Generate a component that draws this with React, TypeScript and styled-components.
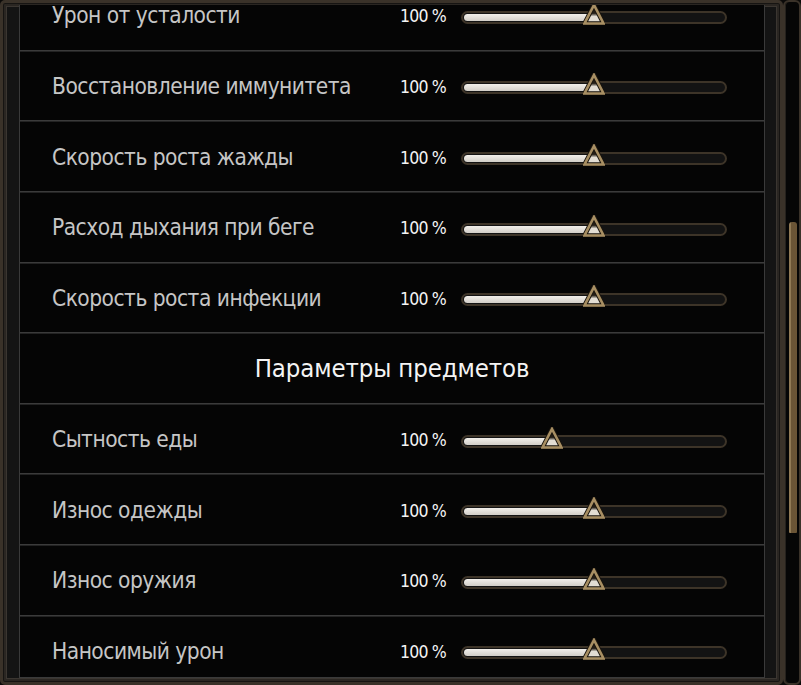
import React, {ReactElement, useLayoutEffect, useRef} from 'react';
import styled, {createGlobalStyle} from 'styled-components';

type SettingRow = {kind: 'setting'; label: string; value: number; pos: number};
type HeaderRow = {kind: 'header'; title: string};
type Item = SettingRow | HeaderRow;

const items: Item[] = [
    {kind: 'setting', label: 'Урон от усталости', value: 100, pos: 0.5},
    {kind: 'setting', label: 'Восстановление иммунитета', value: 100, pos: 0.5},
    {kind: 'setting', label: 'Скорость роста жажды', value: 100, pos: 0.5},
    {kind: 'setting', label: 'Расход дыхания при беге', value: 100, pos: 0.5},
    {kind: 'setting', label: 'Скорость роста инфекции', value: 100, pos: 0.5},
    {kind: 'header', title: 'Параметры предметов'},
    {kind: 'setting', label: 'Сытность еды', value: 100, pos: 0.338},
    {kind: 'setting', label: 'Износ одежды', value: 100, pos: 0.5},
    {kind: 'setting', label: 'Износ оружия', value: 100, pos: 0.5},
    {kind: 'setting', label: 'Наносимый урон', value: 100, pos: 0.5},
];

const GlobalStyle = createGlobalStyle`
    html, body {
        margin: 0;
        padding: 0;
        background: #000;
    }
    body {
        font-family: 'Liberation Sans Narrow', 'DejaVu Sans Condensed', 'Liberation Sans', sans-serif;
    }
`;

function Thumb(): ReactElement {
    return (
        <ThumbIcon width="22" height="22" viewBox="0 0 22 22">
            <defs>
                <linearGradient id="thumb-fill" x1="0" y1="0" x2="0" y2="1">
                    <stop offset="0.45" stopColor="#241e16" />
                    <stop offset="0.62" stopColor="#e2ddd3" />
                </linearGradient>
            </defs>
            <polygon
                points="11,2 20.5,20.5 1.5,20.5"
                fill="url(#thumb-fill)"
                stroke="#1a150e"
                strokeWidth="4.5"
                strokeLinejoin="miter"
            />
            <polygon
                points="11,2 20.5,20.5 1.5,20.5"
                fill="none"
                stroke="#a88f63"
                strokeWidth="2.6"
                strokeLinejoin="miter"
            />
        </ThumbIcon>
    );
}

function Slider({pos}: {pos: number}): ReactElement {
    return (
        <Track>
            <Fill style={{width: `calc(${pos * 100}% - 1px)`}} />
            <ThumbHolder style={{left: `${pos * 100}%`}}>
                <Thumb />
            </ThumbHolder>
        </Track>
    );
}

export default function App(): ReactElement {
    const listRef = useRef<HTMLDivElement>(null);

    useLayoutEffect(() => {
        if (listRef.current) listRef.current.scrollTop = 24.6;
    }, []);

    return (
        <>
            <GlobalStyle />
            <Screen>
                <Panel>
                    <List ref={listRef}>
                        {items.map((item, i) =>
                            item.kind === 'header' ? (
                                <Header key={i}>{item.title}</Header>
                            ) : (
                                <Row key={i}>
                                    <Label>{item.label}</Label>
                                    <Percent>{item.value} %</Percent>
                                    <Slider pos={item.pos} />
                                </Row>
                            ),
                        )}
                    </List>
                </Panel>
                <ScrollTrack>
                    <ScrollThumb />
                </ScrollTrack>
            </Screen>
        </>
    );
}

const Screen = styled.div`
    display: flex;
    width: 801px;
    height: 685px;
    background: #0b0a09;
    overflow: hidden;
`;

const Panel = styled.div`
    flex: none;
    width: 783px;
    height: 100%;
    box-sizing: border-box;
    display: flex;
    flex-direction: column;
    border: 3px solid #3a3229;
    border-radius: 5px;
    padding: 2px 15px 4px 16px;
    background: #141414;
    box-shadow: inset 0 0 0 1px #161412, inset 0 0 0 3px #2a2622, inset 0 0 0 4px #3b3631;
`;

const List = styled.div`
    flex: 1;
    min-height: 0;
    overflow: hidden;
    display: flex;
    flex-direction: column;
    border-left: 1px solid #3a3a3a;
    border-right: 1px solid #3a3a3a;
    border-bottom: 1px solid #3a3a3a;
    background: #050505;
`;

const RowBase = styled.div`
    flex: none;
    box-sizing: border-box;
    height: 70.625px;
    border-top: 1px solid #232323;
    border-bottom: 1px solid #3b3b3b;
    background: #050505;
`;

const Row = styled(RowBase)`
    display: grid;
    grid-template-columns: minmax(0, 1fr) 60px 266px;
    column-gap: 15px;
    align-items: center;
    padding: 0 37px 0 32px;
`;

const Header = styled(RowBase)`
    display: flex;
    align-items: center;
    justify-content: center;
    font-size: 25.5px;
    letter-spacing: -0.1px;
    color: #f4f4f4;
`;

const Label = styled.span`
    font-size: 22.5px;
    letter-spacing: -0.5px;
    color: #c6c6c6;
    white-space: nowrap;
`;

const Percent = styled.span`
    font-size: 17.5px;
    letter-spacing: -0.8px;
    color: #f4f4f4;
    text-align: right;
    white-space: nowrap;
    margin-top: 2px;
`;

const Track = styled.div`
    position: relative;
    box-sizing: border-box;
    height: 13px;
    margin-top: 4px;
    border: 2px solid #3d3428;
    border-radius: 7px;
    background: #131313;
`;

const Fill = styled.div`
    position: absolute;
    top: 1px;
    bottom: 1px;
    left: 1px;
    border-radius: 4px;
    background: linear-gradient(#f2efea, #d2cec7);
`;

const ThumbHolder = styled.div`
    position: absolute;
    top: -10px;
    width: 22px;
    height: 22px;
    margin-left: -11px;
`;

const ThumbIcon = styled.svg`
    display: block;
`;

const ScrollTrack = styled.div`
    flex: none;
    width: 18px;
    height: 100%;
    box-sizing: border-box;
    border: 2px solid #3a3229;
    border-radius: 6px;
    background: #060606;
    padding: 220px 2px 0 4px;
    box-shadow: inset 1px 0 0 #26221d;
`;

const ScrollThumb = styled.div`
    width: 8px;
    height: 311px;
    border-radius: 3px 3px 1px 1px;
    background: linear-gradient(90deg, #917a55 0 30%, #6b5536 30% 100%);
`;
